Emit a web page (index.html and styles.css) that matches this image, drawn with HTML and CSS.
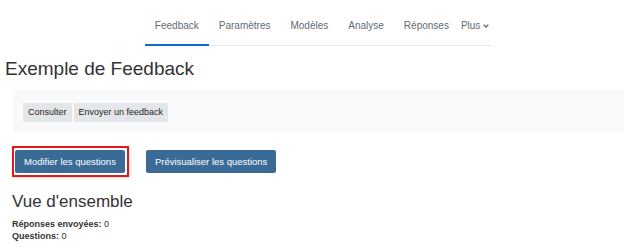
FILE: index.html
```html
<!DOCTYPE html>
<html lang="fr">
<head>
  <meta charset="UTF-8">
  <meta name="viewport" content="width=device-width, initial-scale=1.0">
  <title>Exemple de Feedback</title>
  <link rel="stylesheet" href="styles.css">
</head>
<body>
  <nav class="secondary-nav">
    <ul>
      <li><a class="active" href="#">Feedback</a></li>
      <li><a href="#">Paramètres</a></li>
      <li><a href="#">Modèles</a></li>
      <li><a href="#">Analyse</a></li>
      <li><a href="#">Réponses</a></li>
      <li>
        <a class="more" href="#">Plus
          <svg width="6" height="4" viewBox="0 0 6 4"><path d="M0.7 0.7 L3 3 L5.3 0.7" fill="none" stroke="#5e6a75" stroke-width="1.3"/></svg>
        </a>
      </li>
    </ul>
  </nav>

  <main class="page">
    <h1>Exemple de Feedback</h1>

    <div class="tertiary">
      <a class="light-btn" href="#">Consulter</a>
      <a class="light-btn" href="#">Envoyer un feedback</a>
    </div>

    <div class="actions">
      <span class="highlight"><a class="primary-btn" href="#">Modifier les questions</a></span>
      <a class="primary-btn" href="#">Prévisualiser les questions</a>
    </div>

    <h2>Vue d'ensemble</h2>
    <div class="summary">
      <div><b>Réponses envoyées:</b> 0</div>
      <div><b>Questions:</b> 0</div>
    </div>
  </main>
</body>
</html>
```

FILE: styles.css
```css
body {
  margin: 0;
  background-color: #fff;
  font-family: "Liberation Sans", Arial, sans-serif;
  color: #1d2125;
}

a {
  text-decoration: none;
}

/* Secondary navigation */
.secondary-nav {
  display: flex;
  justify-content: center;
  padding-top: 14px;
  padding-left: 6px;
}

.secondary-nav ul {
  display: flex;
  margin: 0;
  padding: 0;
  list-style: none;
  border-bottom: 1px solid #e3e6e9;
}

.secondary-nav a {
  display: block;
  padding: 6px 10px 13px;
  font-size: 10px;
  color: #5e6a75;
  border-bottom: 2px solid transparent;
  margin-bottom: -1px;
}

.secondary-nav a.active {
  border-bottom-color: #0f6cbf;
}

.secondary-nav a.more {
  padding-left: 2px;
  padding-right: 2px;
}

.secondary-nav a.more svg {
  vertical-align: 1px;
}

/* Page content */
.page {
  padding: 0 6px 0 5px;
}

h1 {
  margin: 12px 0 10px;
  font-size: 19px;
  font-weight: normal;
  color: #333;
}

.tertiary {
  display: flex;
  gap: 2px;
  margin-left: 8px;
  padding: 13px 10px 10px;
  background-color: #f8f9fa;
}

.light-btn {
  display: inline-block;
  padding: 4px 5px;
  font-size: 9px;
  line-height: 11px;
  color: #1d2125;
  background-color: #e4e7ea;
  border-radius: 1px;
}

.actions {
  display: flex;
  align-items: center;
  gap: 17px;
  margin: 14px 0 0 7px;
}

.highlight {
  display: inline-block;
  padding: 2px 2px 2px 1px;
  border: 2px solid #e01b1b;
  box-shadow: 1px 1px 3px rgba(0, 0, 0, 0.15);
}

.primary-btn {
  display: inline-block;
  padding: 6px 9px;
  font-size: 9.5px;
  line-height: 11px;
  color: #fff;
  background-color: #3a6b97;
  border-radius: 2px;
}

h2 {
  margin: 15px 0 6px 7px;
  font-size: 17px;
  font-weight: normal;
  color: #333;
}

.summary {
  margin-left: 7px;
  font-size: 9px;
  line-height: 12px;
  color: #333;
}
```
